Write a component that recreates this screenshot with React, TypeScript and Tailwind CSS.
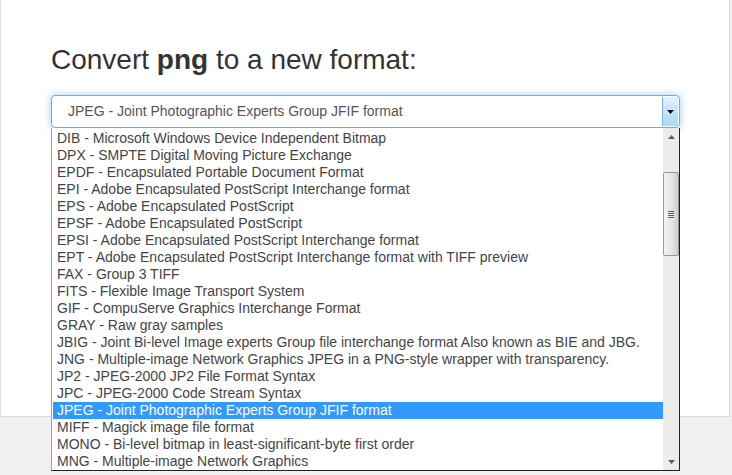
import React from "react";

const formats = [
  "DIB - Microsoft Windows Device Independent Bitmap",
  "DPX - SMPTE Digital Moving Picture Exchange",
  "EPDF - Encapsulated Portable Document Format",
  "EPI - Adobe Encapsulated PostScript Interchange format",
  "EPS - Adobe Encapsulated PostScript",
  "EPSF - Adobe Encapsulated PostScript",
  "EPSI - Adobe Encapsulated PostScript Interchange format",
  "EPT - Adobe Encapsulated PostScript Interchange format with TIFF preview",
  "FAX - Group 3 TIFF",
  "FITS - Flexible Image Transport System",
  "GIF - CompuServe Graphics Interchange Format",
  "GRAY - Raw gray samples",
  "JBIG - Joint Bi-level Image experts Group file interchange format Also known as BIE and JBG.",
  "JNG - Multiple-image Network Graphics JPEG in a PNG-style wrapper with transparency.",
  "JP2 - JPEG-2000 JP2 File Format Syntax",
  "JPC - JPEG-2000 Code Stream Syntax",
  "JPEG - Joint Photographic Experts Group JFIF format",
  "MIFF - Magick image file format",
  "MONO - Bi-level bitmap in least-significant-byte first order",
  "MNG - Multiple-image Network Graphics",
];

const selected = "JPEG - Joint Photographic Experts Group JFIF format";

function ScrollArrow({ up }: { up?: boolean }) {
  return (
    <div className="flex h-[17px] items-center justify-center">
      <svg width="7" height="4" viewBox="0 0 7 4">
        {up ? <path d="M0 4 L3.5 0 L7 4 Z" fill="#606060" /> : <path d="M0 0 L3.5 4 L7 0 Z" fill="#606060" />}
      </svg>
    </div>
  );
}

export default function App() {
  return (
    <div className="relative h-[475px] w-full overflow-hidden bg-[#f0f0f0] font-['Liberation_Sans',Arial,sans-serif]">
      <div className="h-[417px] w-[730px] border-x border-b border-[#dddddd] bg-white pl-[50px] pt-[42px]">
        <h1 className="text-[28px] leading-[36px] text-[#333333]">
          Convert <b>png</b> to a new format:
        </h1>

        <div className="mt-[17px] flex h-[33px] w-[629px] items-stretch rounded-[4px] border border-[#66afe9] bg-white shadow-[0_0_8px_rgba(102,175,233,0.6)]">
          <div className="flex flex-1 items-center pl-[16px] text-[14px] text-[#555555]">{selected}</div>
          <div className="my-[1px] mr-[1px] flex w-[16px] items-center justify-center border-l border-[#7eb4ea] bg-gradient-to-b from-[#e3f1fc] to-[#a9d8f8]">
            <svg width="7" height="4" viewBox="0 0 7 4">
              <path d="M0 0 L3.5 4 L7 0 Z" fill="#111111" />
            </svg>
          </div>
        </div>
      </div>

      {/* open dropdown list */}
      <div className="absolute left-[51px] top-[128px] flex h-[343px] w-[629px] border-b border-l border-r border-b-[#222222] border-l-[#a0a0a0] border-r-[#222222] bg-white">
        <ul className="flex-1 pt-[2px] pl-[1px] text-[14px] text-[#444444]">
          {formats.map((f) => (
            <li
              key={f}
              className={
                f === selected
                  ? "h-[17px] truncate whitespace-nowrap bg-[#3399ff] pl-[4px] leading-[17px] text-white"
                  : "h-[17px] truncate whitespace-nowrap pl-[4px] leading-[17px]"
              }
            >
              {f}
            </li>
          ))}
        </ul>
        <div className="flex w-[16px] flex-col bg-[#ececec]">
          <ScrollArrow up />
          <div className="h-[27px]" />
          <div className="flex h-[84px] items-center justify-center rounded-[2px] border border-[#9a9a9a] bg-gradient-to-r from-[#f4f4f4] via-[#e6e6e6] to-[#cfcfcf]">
            <div className="flex flex-col gap-[1px]">
              <div className="h-px w-[6px] bg-[#606060]" />
              <div className="h-px w-[6px] bg-[#606060]" />
              <div className="h-px w-[6px] bg-[#606060]" />
              <div className="h-px w-[6px] bg-[#606060]" />
            </div>
          </div>
          <div className="flex-1" />
          <ScrollArrow />
        </div>
      </div>
    </div>
  );
}
